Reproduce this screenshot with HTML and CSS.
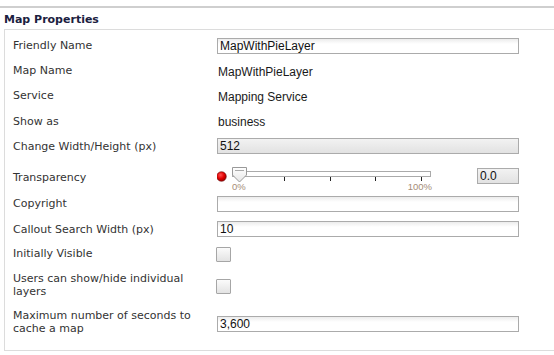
FILE: index.html
```html
<!DOCTYPE html>
<html>
<head>
<meta charset="utf-8">
<link rel="stylesheet" href="styles.css">
</head>
<body>
<div class="topline"></div>
<h1 class="title">Map Properties</h1>
<div class="box">
  <div class="grid">
    <div class="label">Friendly Name</div>
    <div class="ctrl"><input class="txt" type="text" value="MapWithPieLayer"></div>

    <div class="label">Map Name</div>
    <div class="ctrl value">MapWithPieLayer</div>

    <div class="label">Service</div>
    <div class="ctrl value">Mapping Service</div>

    <div class="label">Show as</div>
    <div class="ctrl value">business</div>

    <div class="label">Change Width/Height (px)</div>
    <div class="ctrl"><input class="txt disabled" type="text" value="512" disabled></div>

    <div class="label label-low">Transparency</div>
    <div class="ctrl slider-row">
      <svg class="slider" width="216" height="30" viewBox="0 0 216 30">
        <defs>
          <radialGradient id="dotg" cx="0.4" cy="0.35" r="0.7">
            <stop offset="0" stop-color="#ff5050"/>
            <stop offset="0.55" stop-color="#e00000"/>
            <stop offset="1" stop-color="#900000"/>
          </radialGradient>
          <linearGradient id="thumbg" x1="0" y1="0" x2="0" y2="1">
            <stop offset="0" stop-color="#ffffff"/>
            <stop offset="1" stop-color="#e6e6e6"/>
          </linearGradient>
        </defs>
        <circle cx="4.5" cy="15.5" r="4.8" fill="url(#dotg)" stroke="#6a1010" stroke-width="0.6"/>
        <rect x="15.5" y="10.5" width="198" height="5" fill="#fff" stroke="#aaa"/>
        <g stroke="#222" stroke-width="1">
          <line x1="67.5" y1="16" x2="67.5" y2="20"/>
          <line x1="113.5" y1="16" x2="113.5" y2="20"/>
          <line x1="158.5" y1="16" x2="158.5" y2="20"/>
          <line x1="204.5" y1="16" x2="204.5" y2="20"/>
        </g>
        <polygon points="15.5,6.5 29.5,6.5 29.5,14 22.5,21 15.5,14" fill="url(#thumbg)" stroke="#999"/>
        <line x1="18" y1="9.5" x2="27" y2="9.5" stroke="#aaa"/>
        <text x="15" y="29" class="pct">0%</text>
        <text x="215" y="29" class="pct" text-anchor="end">100%</text>
      </svg>
      <input class="txt disabled small" type="text" value="0.0" disabled>
    </div>

    <div class="label">Copyright</div>
    <div class="ctrl"><input class="txt" type="text" value=""></div>

    <div class="label">Callout Search Width (px)</div>
    <div class="ctrl"><input class="txt" type="text" value="10"></div>

    <div class="label label-up1">Initially Visible</div>
    <div class="ctrl"><span class="check"></span></div>

    <div class="label label-up">Users can show/hide individual<br>layers</div>
    <div class="ctrl"><span class="check"></span></div>

    <div class="label label-up">Maximum number of seconds to<br>cache a map</div>
    <div class="ctrl"><input class="txt" type="text" value="3,600"></div>
  </div>
</div>
</body>
</html>
```
FILE: styles.css
```css
html, body {
  margin: 0;
  padding: 0;
  background: #fff;
}
body {
  font-family: "DejaVu Sans", Verdana, sans-serif;
  font-size: 11px;
  color: #333;
  overflow: hidden;
}
.topline {
  margin-top: 6px;
  height: 2px;
  background: #cfcfcf;
}
.title {
  margin: 5px 0 0 4px;
  font-size: 11px;
  line-height: 13px;
  font-weight: bold;
  color: #1b2140;
}
.box {
  margin: 3px 0 0 4px;
  border: 1px solid #dcdcdc;
  border-right: none;
  padding: 3px 0 11px 8px;
}
.grid {
  display: grid;
  grid-template-columns: 204px 302px;
  grid-template-rows: 25px 25px 25px 26px 24px 35px 21px 30px 20px 45px 30px;
  align-items: center;
}
.label {
  line-height: 13px;
  color: #333;
}
.label-low {
  position: relative;
  top: 2px;
}
.label-up {
  position: relative;
  top: -2px;
}
.label-up1 {
  position: relative;
  top: -1px;
}
.ctrl {
  display: flex;
  align-items: center;
}
.value {
  font-family: "Liberation Sans", Arial, sans-serif;
  font-size: 12px;
  color: #1a1a1a;
  padding-left: 1px;
  position: relative;
  top: 1px;
}
.txt {
  box-sizing: border-box;
  width: 302px;
  height: 16px;
  margin: 0;
  padding: 0 2px;
  border: 1px solid #ababab;
  border-radius: 0;
  font-family: "Liberation Sans", Arial, sans-serif;
  font-size: 12px;
  color: #111;
  background: linear-gradient(#ececec, #ffffff 5px);
  outline: none;
}
.txt.disabled {
  background: linear-gradient(#f2f2f2, #e2e2e2);
  color: #111;
  -webkit-text-fill-color: #111;
  opacity: 1;
}
.txt.small {
  width: 42px;
}
.slider-row {
  justify-content: space-between;
}
.slider {
  display: block;
}
.pct {
  font-family: "Liberation Sans", Arial, sans-serif;
  font-size: 9.5px;
  fill: #a58d78;
}
.check {
  display: block;
  box-sizing: border-box;
  width: 15px;
  height: 15px;
  margin-left: -1px;
  border: 1px solid #a6a6a6;
  border-radius: 1px;
  background: linear-gradient(#fbfbfb, #e3e3e3);
}
```
